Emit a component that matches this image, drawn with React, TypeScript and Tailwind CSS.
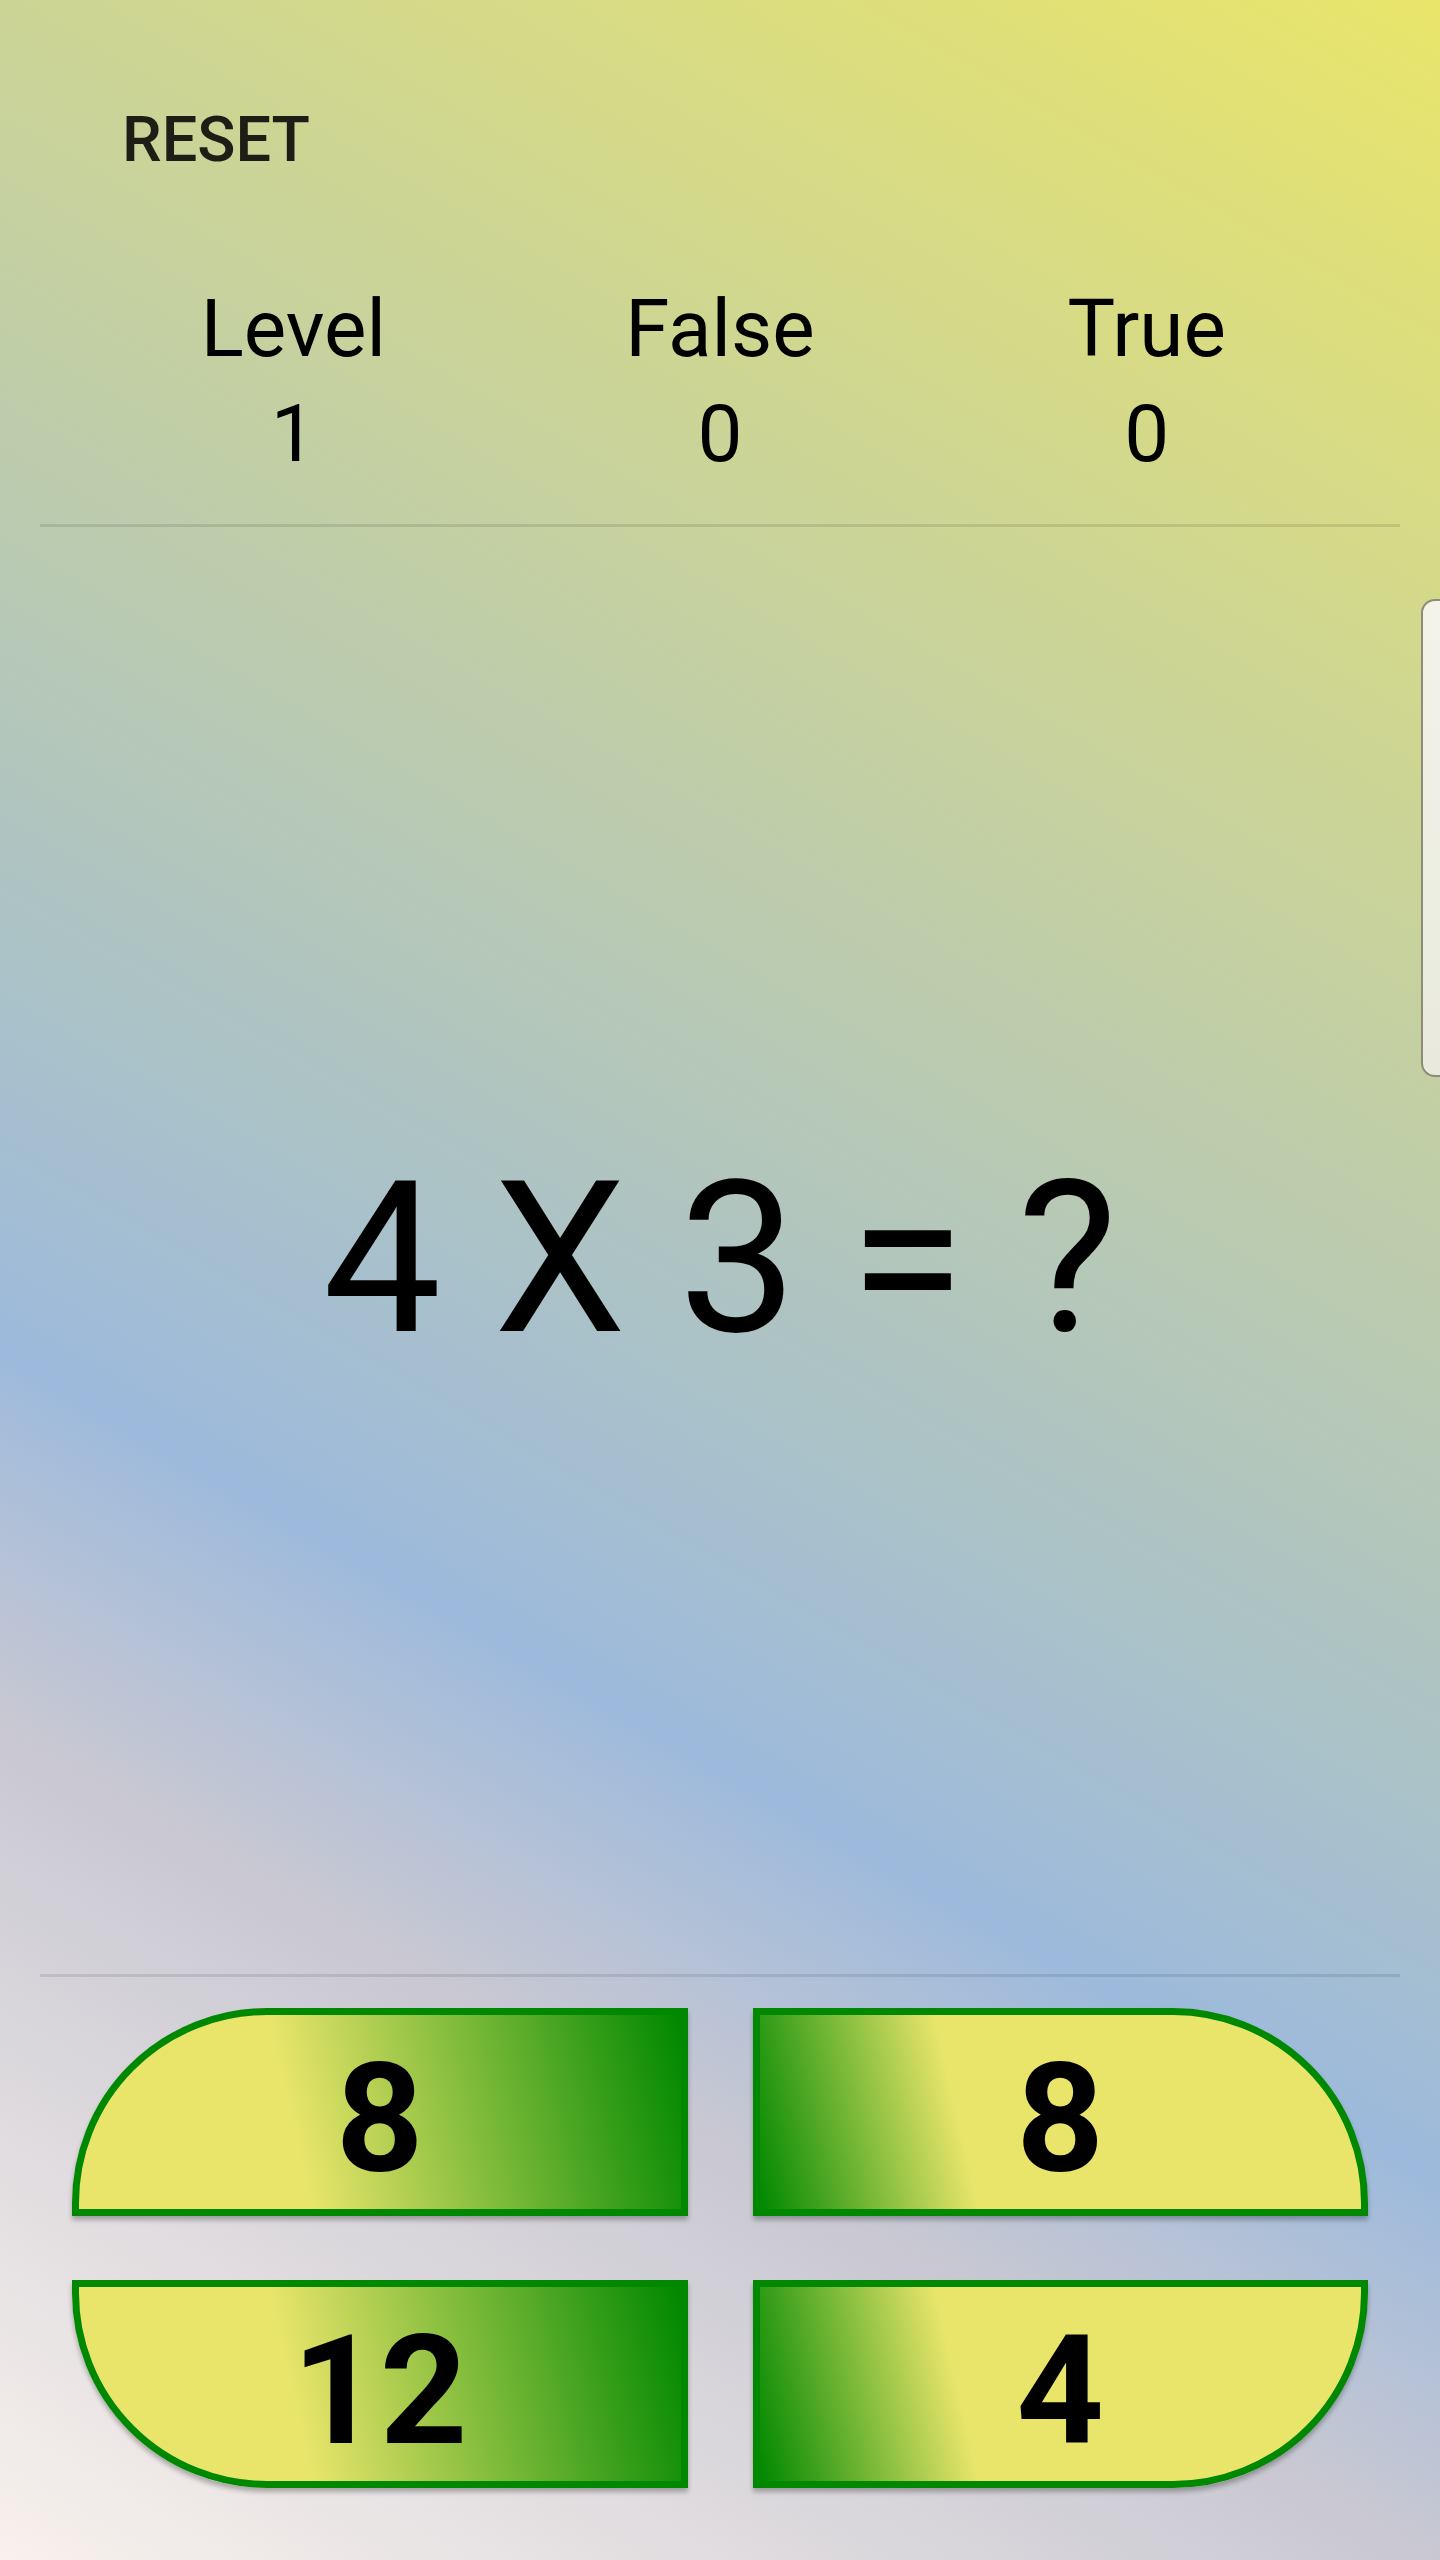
import React from 'react'

const stats = [
  { label: 'Level', value: 1 },
  { label: 'False', value: 0 },
  { label: 'True', value: 0 },
]

const answers = [
  {
    value: 8,
    className:
      'rounded-tl-[195px] bg-[linear-gradient(77deg,#e9e56b_0%,#e9e56b_36%,#008800_100%)]',
  },
  {
    value: 8,
    className:
      'rounded-tr-[195px] bg-[linear-gradient(77deg,#008800_0%,#e9e56b_34%,#e9e56b_100%)]',
  },
  {
    value: 12,
    className:
      'rounded-bl-[195px] bg-[linear-gradient(77deg,#e9e56b_0%,#e9e56b_36%,#008800_100%)]',
  },
  {
    value: 4,
    className:
      'rounded-br-[195px] bg-[linear-gradient(77deg,#008800_0%,#e9e56b_34%,#e9e56b_100%)]',
  },
]

export default function App() {
  return (
    <div
      className="relative w-[1440px] h-[2560px] overflow-hidden bg-[linear-gradient(30deg,#f8f1ed_0%,#c9c8d2_24.5%,#9dbadc_35.7%,#e9e56a_100%)] text-black"
      style={{ fontFamily: 'Roboto, "Noto Sans", sans-serif' }}
    >
      {/* Reset */}
      <div className="pt-[108px] pl-[122px]">
        <button type="button" className="text-[63px] leading-none font-medium text-[#1e1e16]">
          RESET
        </button>
      </div>

      {/* Score board */}
      <div className="mt-[106px] px-[80px] grid grid-cols-3 text-center text-[80px] leading-[105px]">
        {stats.map((s) => (
          <div key={s.label} className="flex flex-col items-center">
            <span>{s.label}</span>
            <span>{s.value}</span>
          </div>
        ))}
      </div>

      <div className="mt-[37px] mx-[40px] h-[3px] bg-black/10" />

      {/* Question */}
      <div className="mt-[627px] text-center text-[211px] leading-none">4 X 3 = ?</div>

      <div className="mt-[609px] mx-[40px] h-[3px] bg-black/10" />

      {/* Answers */}
      <div className="mt-[31px] pl-[72px] w-[1368px] grid grid-cols-2 gap-x-[65px] gap-y-[64px]">
        {answers.map((a, i) => (
          <button
            key={i}
            type="button"
            className={`h-[208px] border-[7px] border-[#008800] shadow-[0_4px_5px_rgba(0,0,0,0.28)] flex items-center justify-center pt-[12px] text-[153px] leading-none font-bold ${a.className}`}
          >
            {a.value}
          </button>
        ))}
      </div>

      {/* Edge panel handle */}
      <div className="absolute left-[1421px] top-[599px] w-[40px] h-[478px] rounded-l-[14px] border-2 border-[#8d8c78] bg-[linear-gradient(180deg,#f3f3ea,#e9eadd)]" />
    </div>
  )
}
